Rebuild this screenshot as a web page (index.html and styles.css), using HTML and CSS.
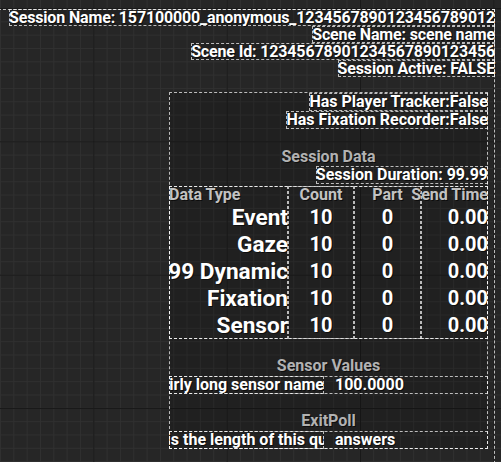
FILE: index.html
```html
<!DOCTYPE html>
<html>
<head>
<meta charset="utf-8">
<link rel="stylesheet" href="styles.css">
</head>
<body>
<div class="root">
  <div class="header">
    <div class="tb">Session Name: 157100000_anonymous_1234567890123456789012</div>
    <div class="tb">Scene Name: scene name</div>
    <div class="tb">Scene Id: 12345678901234567890123456</div>
    <div class="tb">Session Active: FALSE</div>
  </div>
  <div class="panel">
    <div class="prow"><div class="tb">Has Player Tracker:False</div></div>
    <div class="prow"><div class="tb">Has Fixation Recorder:False</div></div>
    <div class="prow prow-tall"></div>
    <div class="title">Session Data</div>
    <div class="prow"><div class="tb">Session Duration: 99.99</div></div>
    <div class="table">
      <div class="col col-type">
        <div class="th th-left">Data Type</div>
        <div class="td td-right td-word"><span>Event</span></div>
        <div class="td td-right td-word"><span>Gaze</span></div>
        <div class="td td-right td-word"><span>99 Dynamic</span></div>
        <div class="td td-right td-word"><span>Fixation</span></div>
        <div class="td td-right td-word"><span>Sensor</span></div>
      </div>
      <div class="col">
        <div class="th th-center">Count</div>
        <div class="td td-center">10</div>
        <div class="td td-center">10</div>
        <div class="td td-center">10</div>
        <div class="td td-center">10</div>
        <div class="td td-center">10</div>
      </div>
      <div class="col">
        <div class="th th-center">Part</div>
        <div class="td td-center">0</div>
        <div class="td td-center">0</div>
        <div class="td td-center">0</div>
        <div class="td td-center">0</div>
        <div class="td td-center">0</div>
      </div>
      <div class="col">
        <div class="th th-right"><span>Send Time</span></div>
        <div class="td td-right"><span>0.00</span></div>
        <div class="td td-right"><span>0.00</span></div>
        <div class="td td-right"><span>0.00</span></div>
        <div class="td td-right"><span>0.00</span></div>
        <div class="td td-right"><span>0.00</span></div>
      </div>
    </div>
    <div class="prow"></div>
    <div class="title">Sensor Values</div>
    <div class="kv">
      <div class="kv-name kv-right"><span>Fairly long sensor name</span></div>
      <div class="kv-value">100.0000</div>
    </div>
    <div class="prow"></div>
    <div class="title">ExitPoll</div>
    <div class="kv">
      <div class="kv-name kv-center"><span>What is the length of this question?</span></div>
      <div class="kv-value">answers</div>
    </div>
  </div>
</div>
</body>
</html>
```

FILE: styles.css
```css
html, body {
  margin: 0;
  padding: 0;
}
body {
  width: 501px;
  height: 462px;
  overflow: hidden;
  font-family: Roboto, "Liberation Sans", sans-serif;
  font-weight: 700;
  font-size: 16px;
  color: #ffffff;
  background-color: #262626;
  background-image:
    linear-gradient(to right, #191919 1px, transparent 1px),
    linear-gradient(to bottom, #191919 1px, transparent 1px),
    linear-gradient(to right, #303030 1px, transparent 1px),
    linear-gradient(to bottom, #303030 1px, transparent 1px);
  background-size:
    133.333px 133.333px,
    133.333px 133.333px,
    13.3333px 13.3333px,
    13.3333px 13.3333px;
  background-position:
    93.333px 8px,
    93.333px 8px,
    0 8px,
    0 8px;
}

.root {
  margin-top: 9px;
  margin-left: -2px;
  width: 497px;
  height: 470px;
  outline: 1px dashed rgba(255, 255, 255, 0.7);
  outline-offset: -1px;
  display: flex;
  flex-direction: column;
}

.header {
  display: flex;
  flex-direction: column;
  align-items: flex-end;
}
.header .tb {
  letter-spacing: -0.15px;
}

.tb {
  white-space: nowrap;
  line-height: 17px;
  outline: 1px dashed rgba(255, 255, 255, 0.7);
  outline-offset: -1px;
  background: rgba(0, 0, 0, 0.12);
  text-shadow: 1px 1px 0 rgba(0, 0, 0, 0.6);
}

.panel {
  margin-top: 15px;
  margin-left: auto;
  margin-right: 7px;
  width: 319px;
  height: 357px;
  box-sizing: border-box;
  padding-top: 1px;
  outline: 1px dashed rgba(255, 255, 255, 0.7);
  outline-offset: -1px;
  background: rgba(0, 0, 0, 0.14);
  display: flex;
  flex-direction: column;
}

.prow {
  height: 18px;
  flex: none;
  display: flex;
  justify-content: flex-end;
  align-items: flex-end;
}
.prow-tall {
  height: 19px;
}
.prow .tb {
  line-height: 18px;
  background: transparent;
}

.title {
  height: 18px;
  flex: none;
  line-height: 18px;
  text-align: center;
  color: #b2b2b2;
  text-shadow: 1px 1px 0 rgba(0, 0, 0, 0.6);
}

.table {
  display: grid;
  grid-template-columns: 119px 66px 67px 67px;
  outline: 1px dashed rgba(255, 255, 255, 0.7);
  outline-offset: -1px;
  margin-top: 2px;
}

.col {
  display: flex;
  flex-direction: column;
  outline: 1px dashed rgba(255, 255, 255, 0.7);
  outline-offset: -1px;
}
.col-type {
  overflow: hidden;
}

.th {
  height: 18px;
  line-height: 18px;
  color: #c2c2c2;
  white-space: nowrap;
  text-shadow: 1px 1px 0 rgba(0, 0, 0, 0.6);
  display: flex;
}
.th-left { justify-content: flex-start; }
.th-center { justify-content: center; }
.th-right { justify-content: flex-end; }

.td {
  height: 27px;
  line-height: 27px;
  font-size: 20px;
  white-space: nowrap;
  display: flex;
  text-shadow: 1px 1px 0 rgba(0, 0, 0, 0.6);
}
.td-word {
  font-size: 22.6px;
}
.td-center { justify-content: center; }
.td-right { justify-content: flex-end; }
.td span, .th span { flex: none; }

.kv {
  display: flex;
  height: 18px;
  flex: none;
  margin-top: 1px;
  outline: 1px dashed rgba(255, 255, 255, 0.7);
  outline-offset: -1px;
}
.kv-name {
  width: 155px;
  box-sizing: border-box;
  flex: none;
  overflow: hidden;
  display: flex;
  white-space: nowrap;
  line-height: 18px;
  outline: 1px dashed rgba(255, 255, 255, 0.7);
  outline-offset: -1px;
  text-shadow: 1px 1px 0 rgba(0, 0, 0, 0.6);
}
.kv-name span { flex: none; }
.kv-right { justify-content: flex-end; }
.kv-center {
  justify-content: center;
  padding-left: 12px;
}
.kv-value {
  margin-left: 10px;
  flex: 1;
  line-height: 18px;
  white-space: nowrap;
  padding-left: 1px;
  text-shadow: 1px 1px 0 rgba(0, 0, 0, 0.6);
}
```
